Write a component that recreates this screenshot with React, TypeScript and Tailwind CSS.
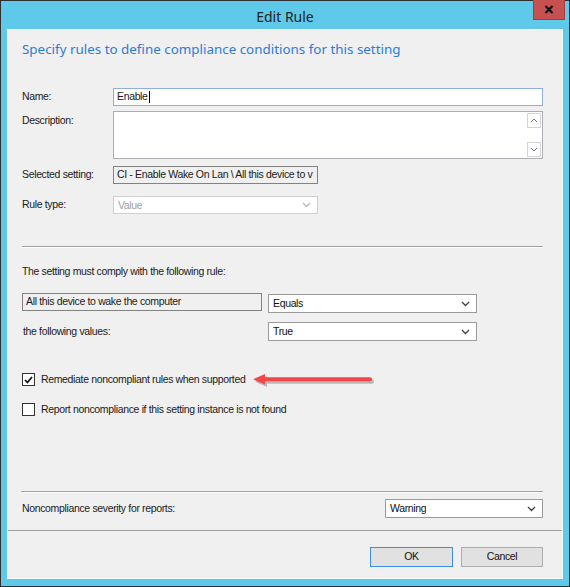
import React from "react";

// ─── Small pieces ─────────────────────────────────────────────────────────────

function Chevron({ disabled = false }: { disabled?: boolean }) {
  return (
    <svg width="9" height="6" viewBox="0 0 9 6" className="shrink-0">
      <path d="M1 1 L4.5 4.5 L8 1" fill="none" stroke={disabled ? "#b8b8b8" : "#404040"} strokeWidth="1.3" />
    </svg>
  );
}

function Dropdown({ value, className, disabled = false }: { value: string; className: string; disabled?: boolean }) {
  return (
    <div
      className={`flex items-center justify-between pl-[4px] pr-[6px] bg-white border ${
        disabled ? "border-[#cfcfcf] text-[#a0a0a0]" : "border-[#9a9a9a] text-[#111]"
      } ${className}`}
    >
      <span className="truncate leading-none">{value}</span>
      <Chevron disabled={disabled} />
    </div>
  );
}

function Checkbox({ checked }: { checked: boolean }) {
  return (
    <div className="w-[13px] h-[13px] bg-white border border-[#333] flex items-center justify-center shrink-0">
      {checked && (
        <svg width="9" height="8" viewBox="0 0 9 8">
          <path d="M1 4 L3.4 6.5 L8 1" fill="none" stroke="#111" strokeWidth="1.8" />
        </svg>
      )}
    </div>
  );
}

function Separator() {
  return (
    <div>
      <div className="h-px bg-[#a0a0a0]" />
      <div className="h-px bg-white" />
    </div>
  );
}

// ─── Main ─────────────────────────────────────────────────────────────────────

export default function App() {
  return (
    <div
      className="w-[570px] h-[587px] bg-[#5ec9e9] border border-[#2f2f2f] flex flex-col text-[10.5px] tracking-[-0.35px] text-[#1a1a1a] select-none"
      style={{ fontFamily: '"Liberation Sans", Arial, sans-serif' }}
    >
      {/* Title bar */}
      <div className="relative h-[28px] shrink-0 flex items-center justify-center">
        <span className="text-[14px] tracking-normal text-[#222] mt-[2px]" style={{ fontFamily: '"Noto Sans", "Liberation Sans", sans-serif' }}>
          Edit Rule
        </span>
        <div className="absolute right-[4px] top-[-1px] w-[32px] h-[20px] bg-[#c75050] border border-[#a33e3e] border-t-0 flex items-center justify-center">
          <svg width="10" height="9" viewBox="0 0 10 9">
            <path d="M1.5 1 L8.5 8 M8.5 1 L1.5 8" stroke="#111" strokeWidth="2.2" />
          </svg>
        </div>
      </div>

      {/* Client area */}
      <div className="relative mx-[6px] mb-[7px] flex-1 bg-[#f0f0f0] border border-[#f9f9f9] flex flex-col">
        <div className="flex-1 flex flex-col pt-[9px] pl-[14px] pr-[19px]">
          <h1
            className="h-[20px] leading-[20px] text-[13.4px] tracking-normal text-[#2d7bd6]"
            style={{ fontFamily: '"Noto Sans", "Liberation Sans", sans-serif' }}
          >
            Specify rules to define compliance conditions for this setting
          </h1>

          {/* Name */}
          <div className="mt-[29px] flex items-center h-[18px]">
            <span className="w-[91px]">Name:</span>
            <div className="flex-1 h-full bg-white border border-[#8fb0dc] flex items-center pl-[3px]">
              Enable<span className="w-px h-[12px] bg-black ml-px" />
            </div>
          </div>

          {/* Description */}
          <div className="mt-[5px] flex h-[48px]">
            <span className="w-[91px] pt-[2px]">Description:</span>
            <div className="flex-1 h-full bg-white border border-[#abadb3] flex justify-end">
              <div className="w-[16px] h-full flex flex-col justify-between p-px">
                <div className="h-[15px] border border-[#d4d4d4] flex items-center justify-center">
                  <svg width="8" height="5" viewBox="0 0 8 5">
                    <path d="M1 4 L4 1 L7 4" fill="none" stroke="#777" strokeWidth="1" />
                  </svg>
                </div>
                <div className="h-[15px] border border-[#d4d4d4] flex items-center justify-center">
                  <svg width="8" height="5" viewBox="0 0 8 5">
                    <path d="M1 1 L4 4 L7 1" fill="none" stroke="#777" strokeWidth="1" />
                  </svg>
                </div>
              </div>
            </div>
          </div>

          {/* Selected setting */}
          <div className="mt-[7px] flex items-center h-[18px]">
            <span className="w-[91px]">Selected setting:</span>
            <div className="w-[205px] h-full bg-[#f0f0f0] border border-[#828282] flex items-center pl-[3px] overflow-hidden whitespace-nowrap">
              CI - Enable Wake On Lan \ All this device to v
            </div>
          </div>

          {/* Rule type */}
          <div className="mt-[12px] flex items-center h-[18px]">
            <span className="w-[91px]">Rule type:</span>
            <Dropdown value="Value" disabled className="w-[205px] h-full" />
          </div>

          <div className="mt-[32px]">
            <Separator />
          </div>

          <p className="mt-[15px] h-[16px] leading-[16px]">The setting must comply with the following rule:</p>

          {/* Rule rows */}
          <div className="mt-[14px] flex items-start h-[19px]">
            <div className="w-[240px] h-[18px] bg-[#f0f0f0] border border-[#828282] flex items-center pl-[3px]">
              All this device to wake the computer
            </div>
            <Dropdown value="Equals" className="ml-[6px] w-[209px] h-[19px] mt-px" />
          </div>

          <div className="mt-[10px] flex items-center h-[19px]">
            <span className="w-[246px] pl-px">the following values:</span>
            <Dropdown value="True" className="w-[209px] h-full" />
          </div>

          {/* Checkboxes */}
          <div className="mt-[32px] flex items-center gap-[6px] h-[13px]">
            <Checkbox checked />
            <span>Remediate noncompliant rules when supported</span>
          </div>
          <div className="mt-[17px] flex items-center gap-[6px] h-[13px]">
            <Checkbox checked={false} />
            <span>Report noncompliance if this setting instance is not found</span>
          </div>

          <div className="mt-[75px] -ml-[1px]">
            <Separator />
          </div>

          {/* Severity */}
          <div className="mt-[6px] flex items-center justify-between h-[19px]">
            <span>Noncompliance severity for reports:</span>
            <Dropdown value="Warning" className="w-[158px] h-[19px]" />
          </div>
        </div>

        {/* Footer */}
        <div className="h-[48px] shrink-0 border-t border-[#a0a0a0] flex justify-end items-start gap-[8px] pt-[16px] pr-[19px]">
          <button className="w-[83px] h-[20px] bg-[#e1e1e1] border border-[#3c8fe0] text-[#111]">OK</button>
          <button className="w-[82px] h-[20px] bg-[#e1e1e1] border border-[#adadad] text-[#111]">Cancel</button>
        </div>

        {/* Red annotation arrow */}
        <svg className="absolute left-[242px] top-[343px]" width="124" height="16" viewBox="0 0 124 16">
          <g opacity="0.35" transform="translate(2,2.5)">
            <path d="M14 6.2 L120 6.2" stroke="#555" strokeWidth="4" strokeLinecap="round" />
            <path d="M3 6.2 L15 1 L15 11.4 Z" fill="#555" />
          </g>
          <path d="M14 6.2 L120 6.2" stroke="#f04848" strokeWidth="4" strokeLinecap="round" />
          <path d="M3 6.2 L15 1 L15 11.4 Z" fill="#f04848" />
        </svg>
      </div>
    </div>
  );
}
